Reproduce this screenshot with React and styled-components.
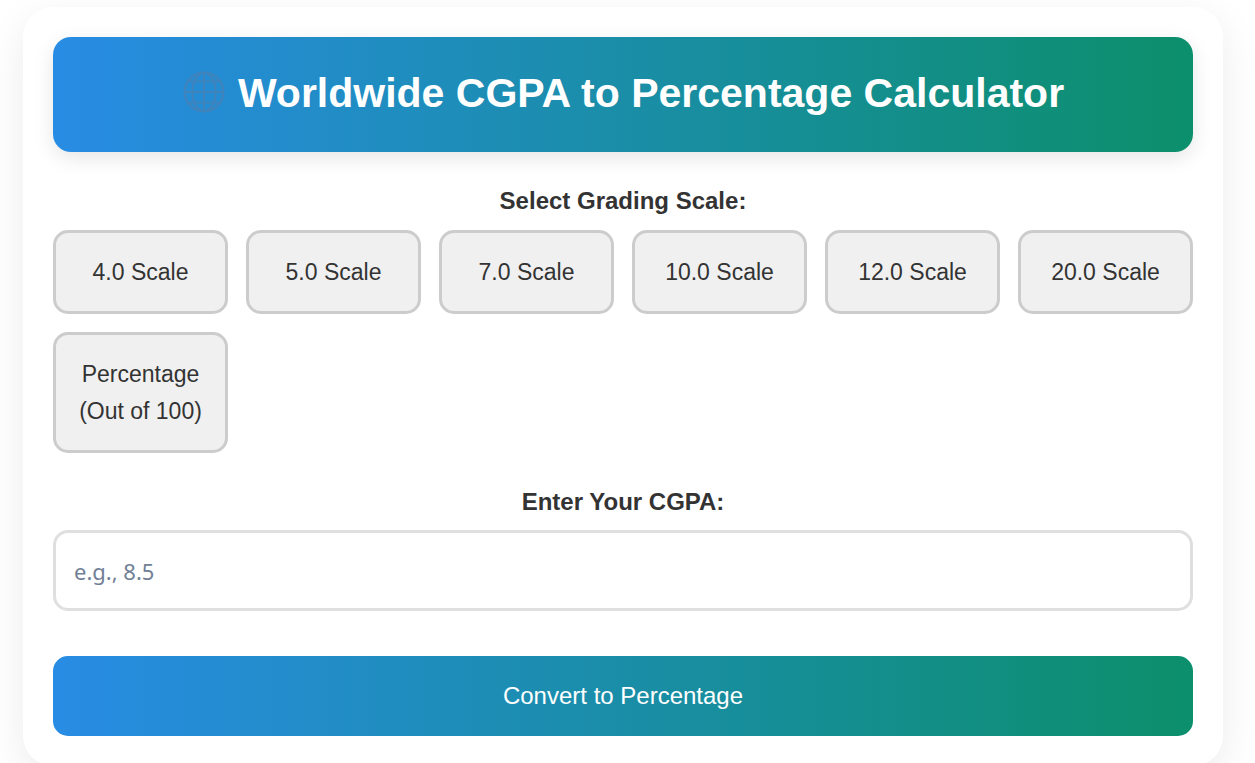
import React, { useState } from 'react';
import styled, { createGlobalStyle } from 'styled-components';

const GlobalStyle = createGlobalStyle`
  * {
    box-sizing: border-box;
  }

  body {
    margin: 0;
    background: #fff;
    color: #333;
    font-family: "Liberation Sans", Arial, sans-serif;
  }
`;

const gradient = `linear-gradient(90deg, #288ce4, #0c8f6b)`;

const Page = styled.main`
  padding: 7px 32px 0 23px;
`;

const Card = styled.section`
  max-width: 1200px;
  margin: 0 auto;
  padding: 30px;
  border-radius: 30px;
  background: #fff;
  box-shadow: 0 12px 40px rgba(0, 0, 0, .08);
`;

const Header = styled.header`
  display: flex;
  align-items: center;
  justify-content: center;
  gap: 12px;
  margin-bottom: 30px;
  padding: 23px 30px 25px;
  border-radius: 18px;
  background: ${ gradient };
  box-shadow: 0 6px 20px rgba(0, 0, 0, .1);
`;

const Title = styled.h1`
  margin: 0;
  color: #fff;
  font-size: 41px;
  font-weight: 700;
  line-height: 67px;
`;

const Globe = styled.svg`
  flex: none;
  width: 44px;
  height: 44px;
  margin-bottom: 4px;
  fill: none;
  stroke: #3f84bd;
  stroke-width: 2.2;
`;

const Legend = styled.h2`
  margin: 0 0 11px;
  font-size: 24px;
  font-weight: 700;
  line-height: 37px;
  text-align: center;
`;

const FieldLabel = styled(Legend).attrs({ as: `label` })`
  display: block;
  margin-bottom: 10px;
`;

const Scales = styled.div`
  display: grid;
  grid-template-columns: repeat(auto-fit, minmax(160px, 1fr));
  align-items: start;
  gap: 18px;
  margin-bottom: 30px;
`;

const Scale = styled.button`
  padding: 21px 20px 20px;
  border: 3px solid ${ props => props.$active ? `#288ce4` : `#ccc` };
  border-radius: 15px;
  background: #f0f0f0;
  color: #333;
  font-family: inherit;
  font-size: 23px;
  line-height: 37px;
  cursor: pointer;
`;

const Input = styled.input`
  display: block;
  width: 100%;
  height: 81px;
  margin-bottom: 45px;
  padding: 0 18px;
  border: 3px solid #dfdfdf;
  border-radius: 15px;
  background: #fff;
  color: #333;
  font-family: "Noto Sans", "Open Sans", sans-serif;
  font-size: 22px;

  &::placeholder {
    color: #718096;
    opacity: 1;
  }
`;

const Convert = styled.button`
  display: block;
  width: 100%;
  height: 80px;
  border: 0;
  border-radius: 15px;
  background: ${ gradient };
  color: #fff;
  font-family: inherit;
  font-size: 24px;
  cursor: pointer;
`;

const scales = [
  `4.0 Scale`,
  `5.0 Scale`,
  `7.0 Scale`,
  `10.0 Scale`,
  `12.0 Scale`,
  `20.0 Scale`,
  `Percentage (Out of 100)`,
];

const GlobeIcon = () =>
  <Globe viewBox="0 0 44 44" aria-hidden="true">
    <circle cx="22" cy="22" r="19.3" />
    <ellipse cx="22" cy="22" rx="11.5" ry="19.3" />
    <path d="M22 2.7v38.6M2.7 22h38.6M6.5 11.5h31M6.5 32.5h31" />
  </Globe>;

const App = () => {
  const [scale, setScale] = useState(null);
  const [cgpa, setCgpa] = useState(``);

  return (
    <Page>
      <GlobalStyle />
      <Card>
        <Header>
          <GlobeIcon />
          <Title>Worldwide CGPA to Percentage Calculator</Title>
        </Header>
        <Legend id="scale-legend">Select Grading Scale:</Legend>
        <Scales role="group" aria-labelledby="scale-legend">
          {
            scales.map(item =>
              <Scale key={ item } type="button" $active={ scale === item } onClick={ () => setScale(item) }>
                { item }
              </Scale>
            )
          }
        </Scales>
        <FieldLabel htmlFor="cgpa">Enter Your CGPA:</FieldLabel>
        <Input
          id="cgpa"
          type="text"
          inputMode="decimal"
          placeholder="e.g., 8.5"
          value={ cgpa }
          onChange={ event => setCgpa(event.target.value) }
        />
        <Convert type="button">Convert to Percentage</Convert>
      </Card>
    </Page>
  );
};

export default App;
